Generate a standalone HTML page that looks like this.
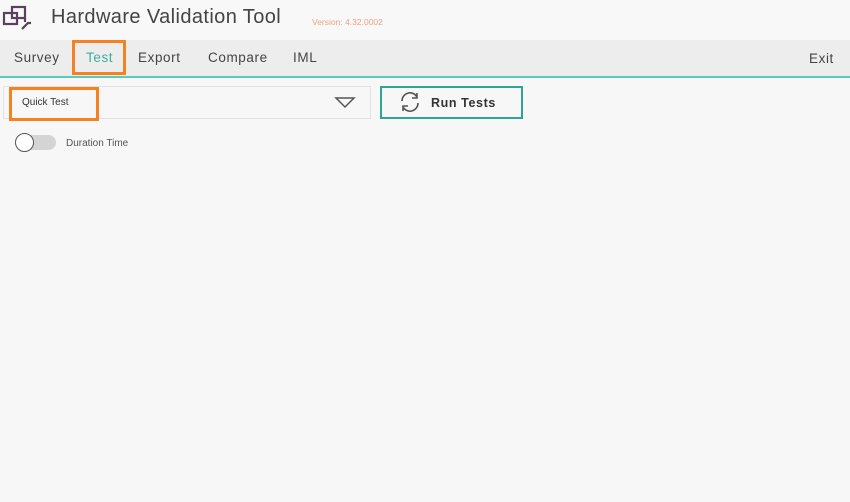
<!DOCTYPE html>
<html><head><style>
body{margin:0;width:850px;height:502px;background:#f7f7f7;font-family:"Liberation Sans",sans-serif;position:relative;overflow:hidden}
.a{position:absolute}
.nav{font-size:13.5px;color:#444;letter-spacing:0.6px;top:50px}
</style></head><body>
<div class="a" style="left:0;top:0;width:850px;height:40px;background:#f8f8f8"></div>
<svg class="a" style="left:1px;top:4px" width="32" height="28" viewBox="0 0 32 28" fill="none" stroke="#5a3f5e" stroke-width="2.2">
<rect x="11" y="3" width="13" height="11"/><rect x="3" y="9" width="13" height="11"/><path d="M24 14 v4 M21 25 l6 -6 l3 0"/></svg>
<div class="a" style="left:51px;top:6px;font-size:20px;color:#444;letter-spacing:0.4px">Hardware Validation Tool</div>
<div class="a" style="left:312px;top:17px;font-size:8.5px;color:#f0a080">Version: 4.32.0002</div>
<div class="a" style="left:0;top:40px;width:850px;height:36px;background:#ededed"></div>
<div class="a" style="left:0;top:76px;width:850px;height:2px;background:#5cc9bd"></div>
<div class="a nav" style="left:14px">Survey</div>
<div class="a nav" style="left:86px;color:#3aaea0">Test</div>
<div class="a nav" style="left:138px">Export</div>
<div class="a nav" style="left:208px">Compare</div>
<div class="a nav" style="left:293px">IML</div>
<div class="a nav" style="left:809px;top:51px">Exit</div>
<div class="a" style="left:72px;top:40px;width:48px;height:29px;border:3px solid #f58220"></div>
<div class="a" style="left:3px;top:86px;width:366px;height:31px;border:1px solid #e2e2e2;background:#f7f7f7"></div>
<div class="a" style="left:9px;top:87px;width:84px;height:28px;border:3px solid #f58220"></div>
<div class="a" style="left:22px;top:97px;font-size:10px;color:#333">Quick Test</div>
<svg class="a" style="left:334px;top:96px" width="22" height="14"><path d="M2 2 L20 2 L11 11 Z" fill="none" stroke="#555" stroke-width="1.5"/></svg>
<div class="a" style="left:380px;top:86px;width:139px;height:29px;border:2px solid #2fa68f;background:#f7f7f7"></div>
<svg class="a" style="left:398px;top:91px" width="24" height="22" viewBox="0 0 24 22" fill="none" stroke="#555" stroke-width="1.6"><path d="M4 10 A8 8 0 0 1 19 6 M19 2 v5 h-5 M20 12 A8 8 0 0 1 5 16 M5 20 v-5 h5"/></svg>
<div class="a" style="left:431px;top:96px;font-size:12.5px;font-weight:bold;color:#333;letter-spacing:0.6px">Run Tests</div>
<div class="a" style="left:16px;top:135px;width:40px;height:15px;border-radius:8px;background:#d4d4d4"></div>
<div class="a" style="left:15px;top:133px;width:17px;height:17px;border-radius:50%;background:#fff;border:1.5px solid #555"></div>
<div class="a" style="left:66px;top:138px;font-size:10px;color:#555">Duration Time</div>
</body></html>
